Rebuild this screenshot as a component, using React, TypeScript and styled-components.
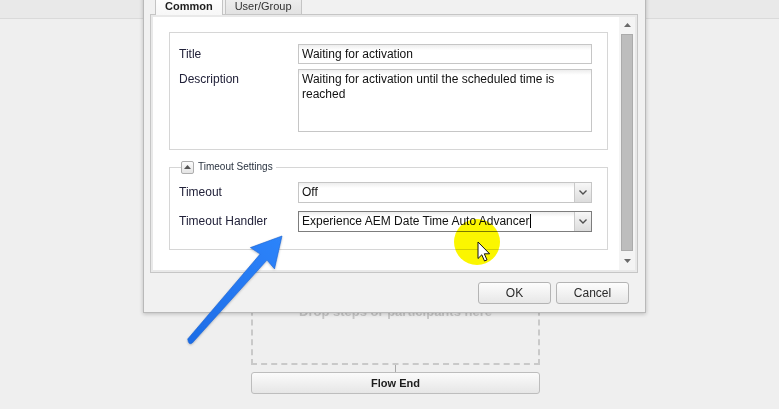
import styled, { createGlobalStyle, css } from 'styled-components';

const GlobalStyle = createGlobalStyle`
    html, body {
        margin: 0;
        padding: 0;
        background: #efefef;
        font-family: "Liberation Sans", Arial, sans-serif;
    }
`

const Page = styled.div`
    position: relative;
    width: 779px;
    height: 409px;
    overflow: hidden;
    background: #efefef;
`

const TopBar = styled.div`
    height: 18px;
    background: #e9e9e9;
    border-bottom: 1px solid #dadada;
`

const FlowColumn = styled.div`
    display: flex;
    flex-direction: column;
    width: 289px;
    margin-left: 251px;
    padding-top: 261px;
`

const DropZone = styled.div`
    box-sizing: border-box;
    height: 85px;
    border: 2px dashed #c9c9c9;
    border-top: none;
    padding-top: 24px;
    text-align: center;
    font-size: 13px;
    font-weight: 700;
    line-height: 16px;
    color: #c6c6c6;
`

const Connector = styled.div`
    width: 1px;
    height: 7px;
    margin-left: 144px;
    background: #a8a8a8;
`

const FlowEnd = styled.div`
    box-sizing: border-box;
    height: 22px;
    border: 1px solid #bdbdbd;
    border-radius: 3px;
    background: linear-gradient(#fbfbfb, #e6e6e6);
    text-align: center;
    font-size: 11px;
    font-weight: 700;
    line-height: 20px;
    color: #1c1c1c;
`

const Dialog = styled.div`
    position: absolute;
    left: 143px;
    top: -8px;
    width: 503px;
    height: 321px;
    box-sizing: border-box;
    display: flex;
    flex-direction: column;
    padding: 0 7px 0 6px;
    border: 1px solid #b9b9b9;
    background: #f1f1f1;
    box-shadow: 0 1px 4px rgba(0, 0, 0, 0.22);
`

const TabStrip = styled.div`
    display: flex;
    align-items: flex-end;
    gap: 2px;
    height: 21px;
    padding-left: 5px;
`

const Tab = styled.div<{ $active?: boolean }>`
    position: relative;
    box-sizing: border-box;
    height: 18px;
    padding: 2px 9px 0;
    border: 1px solid #c4c4c4;
    border-bottom: none;
    border-radius: 3px 3px 0 0;
    font-size: 11px;
    line-height: 14px;
    color: #333;
    background: linear-gradient(#efefef, #e2e2e2);
    ${p => p.$active && css`
        font-weight: 700;
        color: #1e1e1e;
        margin-bottom: -1px;
        height: 19px;
        z-index: 1;
        background: linear-gradient(#ffffff, #f7f7f7);
    `}
`

const PanelBody = styled.div`
    display: flex;
    height: 259px;
    box-sizing: border-box;
    border: 1px solid #c6c6c6;
    padding: 2px;
    background: #e9e9e9;
`

const ScrollArea = styled.div`
    flex: 1;
    display: flex;
    flex-direction: column;
    padding: 15px 11px 0 16px;
    background: #fff;
`

const Fieldset = styled.fieldset`
    margin: 0;
    padding: 11px 0 17px 9px;
    border: 1px solid #d6d6d6;
    min-width: 0;

    & + & {
        margin-top: 10px;
        padding-top: 8px;
    }
`

const Legend = styled.legend`
    display: flex;
    align-items: center;
    gap: 4px;
    margin-left: 2px;
    padding: 0 3px 0 0;
    font-size: 10px;
    line-height: 14px;
    color: #2a3340;
`

const ToggleButton = styled.span`
    display: flex;
    align-items: center;
    justify-content: center;
    width: 11px;
    height: 11px;
    border: 1px solid #aeaeae;
    border-radius: 2px;
    background: linear-gradient(#fdfdfd, #e4e4e4);
`

const FormGrid = styled.div<{ $gap?: number }>`
    display: grid;
    grid-template-columns: 119px 294px;
    row-gap: ${p => p.$gap ?? 5}px;
    align-items: start;
`

const Label = styled.div`
    font-size: 12px;
    line-height: 20px;
    color: #22223a;
`

const TextField = styled.div<{ $tall?: boolean }>`
    box-sizing: border-box;
    height: ${p => (p.$tall ? '63px' : '20px')};
    padding: ${p => (p.$tall ? '2px 3px' : '0 3px')};
    border: 1px solid #c6c6c6;
    background: linear-gradient(#ededed, #ffffff 5px);
    font-size: 12px;
    line-height: ${p => (p.$tall ? '15px' : '18px')};
    color: #111;
`

const Select = styled.div<{ $focused?: boolean }>`
    display: flex;
    box-sizing: border-box;
    height: 21px;
    border: 1px solid ${p => (p.$focused ? '#7d7d7d' : '#c6c6c6')};
    background: linear-gradient(#ededed, #ffffff 5px);
`

const SelectValue = styled.div`
    flex: 1;
    padding-left: 3px;
    font-size: 12px;
    line-height: 19px;
    color: #111;
`

const Caret = styled.span`
    display: inline-block;
    width: 1px;
    height: 14px;
    margin-left: 1px;
    vertical-align: -3px;
    background: #000;
`

const SelectButton = styled.div`
    display: flex;
    align-items: center;
    justify-content: center;
    width: 16px;
    border-left: 1px solid #c9c9c9;
    background: linear-gradient(#f7f7f7, #dcdcdc);
`

const Scrollbar = styled.div`
    display: flex;
    flex-direction: column;
    width: 16px;
    background: #f4f4f4;
`

const ScrollArrow = styled.div<{ $h: number }>`
    display: flex;
    align-items: center;
    justify-content: center;
    height: ${p => p.$h}px;
`

const ScrollThumb = styled.div`
    flex: 1;
    margin: 1px 2px 0;
    border: 1px solid #ababab;
    background: #bdbdbd;
`

const Footer = styled.div`
    display: flex;
    justify-content: flex-end;
    align-items: center;
    gap: 5px;
    flex: 1;
    padding-right: 9px;
`

const DialogButton = styled.div`
    box-sizing: border-box;
    width: 73px;
    height: 22px;
    border: 1px solid #b4b4b4;
    border-radius: 3px;
    background: linear-gradient(#fdfdfd, #e7e7e7);
    text-align: center;
    font-size: 12px;
    line-height: 20px;
    color: #2b2b2b;
`

const Highlight = styled.div`
    position: absolute;
    left: 454px;
    top: 219px;
    width: 46px;
    height: 46px;
    border-radius: 50%;
    background: #fbf600;
    mix-blend-mode: multiply;
`

const Overlay = styled.svg`
    position: absolute;
    left: 0;
    top: 0;
    pointer-events: none;
`

function Chevron() {
    return (
        <svg width="8" height="5" viewBox="0 0 8 5">
            <path d="M0.5 0.5 L4 4 L7.5 0.5" fill="none" stroke="#505050" strokeWidth="1.4" />
        </svg>
    )
}

function Triangle(props: { up?: boolean, color?: string }) {
    return (
        <svg width="7" height="4" viewBox="0 0 7 4">
            <path d={props.up ? 'M0 4 L3.5 0 L7 4 Z' : 'M0 0 L3.5 4 L7 0 Z'} fill={props.color || '#6a6a6a'} />
        </svg>
    )
}

function TimeoutSelect(props: { value: string, focused?: boolean, caret?: boolean }) {
    return (
        <Select $focused={props.focused}>
            <SelectValue>
                {props.value}
                {props.caret && <Caret />}
            </SelectValue>
            <SelectButton><Chevron /></SelectButton>
        </Select>
    )
}

export default function App() {
    return (
        <Page>
            <GlobalStyle />
            <TopBar />
            <FlowColumn>
                <DropZone>Drop steps or participants here</DropZone>
                <Connector />
                <FlowEnd>Flow End</FlowEnd>
            </FlowColumn>

            <Dialog>
                <TabStrip>
                    <Tab $active>Common</Tab>
                    <Tab>User/Group</Tab>
                </TabStrip>
                <PanelBody>
                    <ScrollArea>
                        <Fieldset>
                            <FormGrid>
                                <Label>Title</Label>
                                <TextField>Waiting for activation</TextField>
                                <Label>Description</Label>
                                <TextField $tall>Waiting for activation until the scheduled time is reached</TextField>
                            </FormGrid>
                        </Fieldset>
                        <Fieldset>
                            <Legend>
                                <ToggleButton><Triangle up color="#555" /></ToggleButton>
                                Timeout Settings
                            </Legend>
                            <FormGrid $gap={8}>
                                <Label>Timeout</Label>
                                <TimeoutSelect value="Off" />
                                <Label>Timeout Handler</Label>
                                <TimeoutSelect value="Experience AEM Date Time Auto Advancer" focused caret />
                            </FormGrid>
                        </Fieldset>
                    </ScrollArea>
                    <Scrollbar>
                        <ScrollArrow $h={16}><Triangle up /></ScrollArrow>
                        <ScrollThumb />
                        <ScrollArrow $h={19}><Triangle /></ScrollArrow>
                    </Scrollbar>
                </PanelBody>
                <Footer>
                    <DialogButton>OK</DialogButton>
                    <DialogButton>Cancel</DialogButton>
                </Footer>
            </Dialog>

            <Highlight />
            <Overlay width="779" height="409" viewBox="0 0 779 409">
                <defs>
                    <linearGradient id="arrowFill" x1="0" y1="1" x2="1" y2="0">
                        <stop offset="0" stopColor="#1d6ce6" />
                        <stop offset="1" stopColor="#2d84fb" />
                    </linearGradient>
                    <filter id="arrowShadow" x="-20%" y="-20%" width="140%" height="140%">
                        <feDropShadow dx="0" dy="1" stdDeviation="1" floodColor="#000" floodOpacity="0.25" />
                    </filter>
                </defs>
                <path
                    d="M282 236 L274.5 268.9 L267 260.1 L192.3 343 Q188.5 345.5 187.7 339 L260.1 254.1 L250.4 247.6 Z"
                    fill="url(#arrowFill)"
                    stroke="#1a62d0"
                    strokeWidth="0.6"
                    strokeLinejoin="round"
                    filter="url(#arrowShadow)"
                />
                <path
                    d="M478 242 L478 258.5 L481.8 254.8 L484.5 261 L487 259.9 L484.3 253.8 L489.6 253.8 Z"
                    fill="#fff"
                    stroke="#111"
                    strokeWidth="1"
                    strokeLinejoin="round"
                />
            </Overlay>
        </Page>
    )
}
